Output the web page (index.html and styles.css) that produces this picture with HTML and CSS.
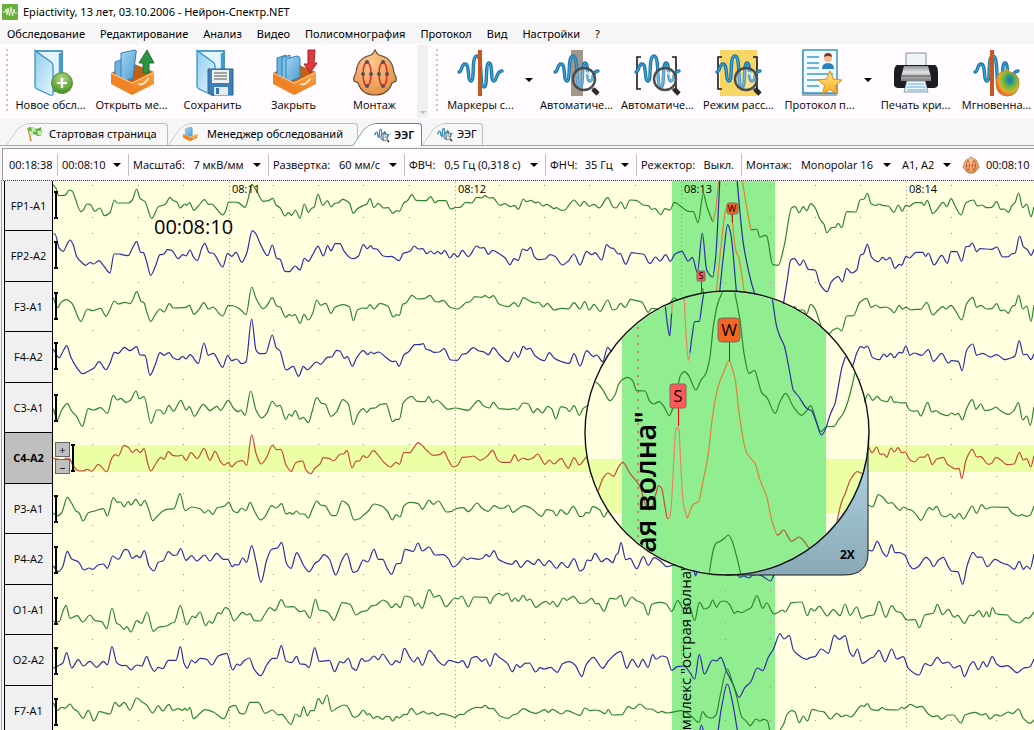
FILE: index.html
```
<!DOCTYPE html>
<html lang="ru">
<head>
    <meta charset="UTF-8">
    <meta name="viewport" content="width=device-width, initial-scale=1.0">
    <title>Epiactivity, 13 лет, 03.10.2006 - Нейрон-Спектр.NET</title>
    <link rel="stylesheet" href="styles.css">
</head>
<body>
    <svg class="defs" width="0" height="0" aria-hidden="true">
        <defs>
            <linearGradient id="g-folder" x1="0" y1="0" x2="1" y2="1">
                <stop offset="0" stop-color="#8fcdee"/><stop offset="1" stop-color="#e6f6fd"/>
            </linearGradient>
            <linearGradient id="g-sheet" x1="0" y1="0" x2="1" y2="1">
                <stop offset="0" stop-color="#a5d4f0"/><stop offset="1" stop-color="#4b9cd0"/>
            </linearGradient>
            <linearGradient id="g-box" x1="0" y1="0" x2="0" y2="1">
                <stop offset="0" stop-color="#fba544"/><stop offset="1" stop-color="#ee7a1c"/>
            </linearGradient>
            <radialGradient id="g-head" cx="0.4" cy="0.3" r="0.8">
                <stop offset="0" stop-color="#fcc98e"/><stop offset="1" stop-color="#e28c42"/>
            </radialGradient>
            <radialGradient id="g-plus" cx="0.5" cy="0.3" r="0.7">
                <stop offset="0" stop-color="#b5d98a"/><stop offset="1" stop-color="#3f8f1e"/>
            </radialGradient>
            <linearGradient id="g-star" x1="0" y1="0" x2="0" y2="1">
                <stop offset="0" stop-color="#ffe98a"/><stop offset="1" stop-color="#fba91c"/>
            </linearGradient>
            <linearGradient id="g-print" x1="0" y1="0" x2="0" y2="1">
                <stop offset="0" stop-color="#8d8f91"/><stop offset="0.4" stop-color="#e2e3e4"/><stop offset="1" stop-color="#77797b"/>
            </linearGradient>
            <radialGradient id="g-map" cx="0.6" cy="0.4" r="0.7">
                <stop offset="0" stop-color="#1f6fb0"/><stop offset="0.22" stop-color="#2f9a8a"/><stop offset="0.38" stop-color="#6cb43a"/><stop offset="0.65" stop-color="#d6b32c"/><stop offset="0.85" stop-color="#ee6a2a"/><stop offset="1" stop-color="#e23a2a"/>
            </radialGradient>

            <symbol id="i-wave" viewBox="0 0 48 48">
                <path d="M2 23C5 23 4 15 8 15C13 15 10 32 14 32C18 32 14 7 20 7C26 7 22 38 27 38C31 38 28 14 32 14C36 14 33 32 37 32C40 32 39 22 45 22" fill="none" stroke="#1b76a8" stroke-width="3.4" stroke-linecap="round"/>
                <path d="M2 23C5 23 4 15 8 15C13 15 10 32 14 32C18 32 14 7 20 7C26 7 22 38 27 38C31 38 28 14 32 14C36 14 33 32 37 32C40 32 39 22 45 22" fill="none" stroke="#43a4d3" stroke-width="1.2" stroke-linecap="round"/>
            </symbol>
            <symbol id="i-lens" viewBox="0 0 48 48">
                <circle cx="31" cy="30" r="11" fill="#fff" fill-opacity="0.25" stroke="#4c4c4c" stroke-width="2.4"/>
                <path d="M33 24a4 4 0 0 1 4 5" fill="none" stroke="#fff" stroke-width="2.4" stroke-linecap="round" opacity="0.7"/>
                <path d="M38.500 38.500L41 41" stroke="#777" stroke-width="2"/>
                <path d="M40 40L45 45" stroke="#2a2a2a" stroke-width="4.600"/>
            </symbol>
            <symbol id="i-brackets" viewBox="0 0 48 48">
                <path d="M7 8H3V40H7M38 8H42V40H38" fill="none" stroke="#1a1a1a" stroke-width="1.600"/>
            </symbol>
            <symbol id="i-folder" viewBox="0 0 48 48">
                <path d="M9 2H35V42H26" fill="#e2f4fc" stroke="#1c7fb8" stroke-width="1.600"/>
                <path d="M33 4V40" stroke="#3f9fd0" stroke-width="2.400"/>
                <path d="M8 1.500L24 13Q26 14 26 17V44Q26 47 23 46L10 40Q8 39 8 37Z" fill="url(#g-folder)" stroke="#2b8cc4" stroke-width="1.200"/>
            </symbol>
            <symbol id="i-box" viewBox="0 0 48 48">
                <path d="M3 24L24 34V46L3 35Z" fill="#f08228"/>
                <path d="M24 34L46 23V35L24 46Z" fill="url(#g-box)"/>
                <path d="M3 24L24 34L46 23" fill="none" stroke="#ffc27a" stroke-width="1.200"/>
                <path d="M31 35Q35 37 40 30" fill="none" stroke="#fff0d8" stroke-width="1.600" stroke-linecap="round"/>
            </symbol>
            <symbol id="i-head" viewBox="0 0 48 48">
                <path d="M20 6Q22 5 24 1Q26 5 28 6Q42 9 43 24Q46 28 45 32L41 34Q37 46 24 46Q11 46 7 34L3 32Q2 28 5 24Q6 9 20 6Z" fill="url(#g-head)" stroke="#6b4a32" stroke-width="1.200"/>
                <g fill="none" stroke="#e8222a" stroke-width="1.500"><ellipse cx="16" cy="25" rx="4" ry="12"/><ellipse cx="32" cy="25" rx="4" ry="12"/></g>
                <g fill="#5a5050"><circle cx="16" cy="13" r="2"/><circle cx="32" cy="13" r="2"/><circle cx="12" cy="25" r="2"/><circle cx="20" cy="25" r="2"/><circle cx="28" cy="25" r="2"/><circle cx="36" cy="25" r="2"/><circle cx="16" cy="37" r="2"/><circle cx="32" cy="37" r="2"/></g>
            </symbol>
        </defs>
    </svg>

    <header class="titlebar">
        <svg class="app-icon" viewBox="0 0 16 16"><rect width="16" height="16" rx="1" fill="#6cae3c"/><path d="M1 8H3L4 5L5 11L6 4L7.500 12L9 3L10.500 12L12 5L13 9H15" fill="none" stroke="#e6f6d4"/></svg>
        <span>Epiactivity, 13 лет, 03.10.2006 - Нейрон-Спектр.NET</span>
    </header>

    <nav class="menu">
        <a href="#">Обследование</a>
        <a href="#">Редактирование</a>
        <a href="#">Анализ</a>
        <a href="#">Видео</a>
        <a href="#">Полисомнография</a>
        <a href="#">Протокол</a>
        <a href="#">Вид</a>
        <a href="#">Настройки</a>
        <a href="#">?</a>
    </nav>

    <div class="toolbar">
        <span class="grip"></span>
        <button type="button" class="tool">
            <svg viewBox="0 0 48 48"><use href="#i-folder"/><circle cx="35" cy="34" r="10.500" fill="url(#g-plus)" stroke="#5b8f3c"/><path d="M35 29V39M30 34H40" stroke="#fff" stroke-width="2.200"/></svg>
            Новое обсл...
        </button>
        <button type="button" class="tool">
            <svg viewBox="0 0 48 48"><path d="M3 24L24 14L46 23L24 34Z" fill="#c65f16"/><path d="M7 13L20 8V32L7 27Z" fill="#6fb3dc" stroke="#2f83b8"/><path d="M13 4L27 1Q29 1 28 4L25 29L13 33Z" fill="url(#g-sheet)" stroke="#2f83b8"/><path d="M39 1L46 14H41V24H35V14H31Z" fill="#2f9440" stroke="#1d7430"/><use href="#i-box"/></svg>
            Открыть ме...
        </button>
        <button type="button" class="tool">
            <svg viewBox="0 0 48 48"><use href="#i-folder"/><path d="M19 20H44V46H22L19 43Z" fill="#3d7fb6" stroke="#28659b"/><rect x="23" y="21" width="17" height="13" fill="#eef1f3"/><path d="M25 24H38M25 27H38M25 30H38" stroke="#555"/><rect x="25" y="38" width="14" height="8" fill="#e3eaf0"/><rect x="27" y="39" width="3" height="6" fill="#2f78b4"/></svg>
            Сохранить
        </button>
        <button type="button" class="tool">
            <svg viewBox="0 0 48 48"><path d="M3 24L24 14L46 23L24 34Z" fill="#c65f16"/><path d="M7 9L16 6V32L7 27Z" fill="#6fb3dc" stroke="#2f83b8"/><path d="M12 9L20 6V32L12 29Z" fill="#83c0e4" stroke="#2f83b8"/><path d="M16 10L27 7Q30 7 30 10V28L16 34Z" fill="url(#g-sheet)" stroke="#2f83b8"/><path d="M38 1H45L44 14H47L40 24L34 15H38Z" fill="#dc3a3a" stroke="#b02028"/><use href="#i-box"/></svg>
            Закрыть
        </button>
        <button type="button" class="tool">
            <svg viewBox="0 0 48 48"><use href="#i-head"/></svg>
            Монтаж
        </button>
        <button type="button" class="overflow" aria-label="Другие кнопки"></button>
        <span class="grip"></span>
        <button type="button" class="tool">
            <svg viewBox="0 0 48 48"><use href="#i-wave"/><rect x="21" y="1" width="4" height="46" fill="#c8561f"/></svg>
            Маркеры с...
        </button>
        <button type="button" class="drop" aria-label="Выбрать маркер"></button>
        <button type="button" class="tool">
            <svg viewBox="0 0 48 48"><rect x="18" y="1" width="12" height="46" fill="#a3968a"/><use href="#i-wave"/><use href="#i-lens"/></svg>
            Автоматиче...
        </button>
        <button type="button" class="tool">
            <svg viewBox="0 0 48 48"><use href="#i-brackets"/><use href="#i-wave"/><use href="#i-lens"/></svg>
            Автоматиче...
        </button>
        <button type="button" class="tool">
            <svg viewBox="0 0 48 48"><rect x="5" y="1" width="37" height="46" fill="#f8d567"/><use href="#i-brackets"/><use href="#i-wave"/><use href="#i-lens"/></svg>
            Режим расс...
        </button>
        <button type="button" class="tool">
            <svg viewBox="0 0 48 48"><rect x="6" y="2" width="35" height="45" fill="#9cb4c0"/><rect x="7" y="1" width="34" height="43" fill="#f2fafd" stroke="#2d8fbe" stroke-width="1.400"/><path d="M11 8H23M11 14H23M11 19H23M11 25H37M11 31H27M11 37H23" stroke="#3f9fd0" stroke-width="1.600"/><circle cx="32" cy="9" r="4" fill="#f5b88a"/><path d="M28 8Q28 4 32 4Q36 4 36 8Q32 6 28 8Z" fill="#7a3a1c"/><path d="M26 20Q26 14 32 14Q38 14 38 20Z" fill="#2b7fc0"/><path d="M34 22L37.500 30L46 31L39.500 36.500L41.500 45L34 40.500L26.500 45L28.500 36.500L22 31L30.500 30Z" fill="url(#g-star)" stroke="#d98c1a"/></svg>
            Протокол п...
        </button>
        <button type="button" class="drop" aria-label="Выбрать протокол"></button>
        <button type="button" class="tool">
            <svg viewBox="0 0 48 48"><rect x="14" y="4" width="20" height="14" fill="#eef4f7" stroke="#8a8f92"/><path d="M5 16H43Q46 17 46 24V36Q45 39 42 39H6Q3 39 2 36V24Q2 17 5 16Z" fill="#1b1d20"/><path d="M12 17H36L39 28V32H9V28Z" fill="url(#g-print)"/><path d="M9 27H39" stroke="#555"/><path d="M15 32H33L36 43H12Z" fill="#f0f6fa" stroke="#8a9aa4"/><path d="M16 35H32M15 38H33M15 41H34" stroke="#5ea9dc"/></svg>
            Печать кри...
        </button>
        <button type="button" class="tool">
            <svg viewBox="0 0 48 48"><use href="#i-wave"/><rect x="17" y="1" width="4" height="46" fill="#c8561f"/><path d="M34 20L37 23Q46 25 46 34Q45 47 34 47Q23 46 23 34Q23 24 31 22Z" fill="url(#g-map)" stroke="#c9853a"/></svg>
            Мгновенна...
        </button>
    </div>

    <div class="tabs">
        <button type="button" class="tab tab-start">
            <svg viewBox="0 0 16 16"><path d="M2 2L5 15" stroke="#d98a32" stroke-width="1.600"/><path d="M2 2Q5 0 8 2T15 1L16 9Q12 11 10 9T4 10Z" fill="#5db446"/><path d="M5 1L6 5L10 6L9 2ZM11 5L15 5L16 9L12 9ZM3 5L7 5L7 9L4 10Z" fill="#c6eab4"/></svg>
            Стартовая страница
        </button>
        <button type="button" class="tab tab-manager">
            <svg viewBox="0 0 48 48"><path d="M10 8L26 3Q31 3 31 8V30L10 34Z" fill="url(#g-sheet)" stroke="#2f83b8"/><use href="#i-box"/></svg>
            Менеджер обследований
        </button>
        <button type="button" class="tab tab-eeg active">
            <svg viewBox="0 0 48 48"><use href="#i-wave"/><use href="#i-lens"/></svg>
            ЭЭГ
        </button>
        <button type="button" class="tab tab-eeg">
            <svg viewBox="0 0 48 48"><use href="#i-wave"/><use href="#i-lens"/></svg>
            ЭЭГ
        </button>
    </div>

    <div class="params">
        <span class="param total">00:18:38</span>
        <label class="param position"><select aria-label="Время"><option>00:08:10</option></select></label>
        <label class="param scale">Масштаб: <select><option>7 мкВ/мм</option></select></label>
        <label class="param sweep">Развертка: <select><option>60 мм/с</option></select></label>
        <label class="param highpass">ФВЧ: <select><option>0,5 Гц (0,318 с)</option></select></label>
        <label class="param lowpass">ФНЧ: <select><option>35 Гц</option></select></label>
        <span class="param notch">Режектор: <span>Выкл.</span></span>
        <label class="param montage">Монтаж: <select><option>Monopolar 16</option></select></label>
        <label class="param refs"><select aria-label="Референты"><option>A1, A2</option></select></label>
        <span class="param current"><svg viewBox="0 0 48 48"><use href="#i-head"/></svg>00:08:10</span>
    </div>

    <main class="record">
        <ul class="channels">
            <li>FP1-A1</li>
            <li>FP2-A2</li>
            <li>F3-A1</li>
            <li>F4-A2</li>
            <li>C3-A1</li>
            <li class="selected">C4-A2</li>
            <li>P3-A1</li>
            <li>P4-A2</li>
            <li>O1-A1</li>
            <li>O2-A2</li>
            <li>F7-A1</li>
        </ul>
        <div class="chart">
            <svg class="plot">
                <defs>
                    <clipPath id="lens-clip"><circle cx="727" cy="433" r="141"/></clipPath>
                    <linearGradient id="g-handle" x1="0" y1="0" x2="0" y2="1">
                        <stop offset="0" stop-color="#b4d9ea"/><stop offset="1" stop-color="#8aa9b6"/>
                    </linearGradient>
                </defs>
                <g transform="translate(-53 -181)">
                    <rect class="active-band" x="74" y="445" width="100%" height="27"/>
                    <rect class="complex" x="672" y="181" width="103" height="100%"/>
                    <g id="grid"></g>
                    <g id="traces"></g>
                    <g id="brackets"></g>

                    <text class="tick" x="232" y="193">08:11</text>
                    <text class="tick" x="458" y="193">08:12</text>
                    <text class="tick" x="684" y="193">08:13</text>
                    <text class="tick" x="909" y="193">08:14</text>
                    <text class="clock" x="154" y="234">00:08:10</text>
                    <text class="note" text-anchor="end" transform="translate(691 565) rotate(-90)">мплекс "острая волна"</text>

                    <path class="stick-w" d="M732.500 214V223"/>
                    <rect class="tag tag-w" x="727" y="203" width="11" height="11" rx="2"/>
                    <text class="tag-text" x="732" y="212">W</text>
                    <path class="stick-s" d="M701.500 281V293"/>
                    <rect class="tag tag-s" x="697" y="271" width="8" height="10" rx="1"/>
                    <text class="tag-text" x="701" y="279">S</text>

                    <path d="M868 433V553Q868 575 844 575H727Z" fill="url(#g-handle)" stroke="#1a1a1a"/>
                    <g clip-path="url(#lens-clip)">
                        <rect class="lens-paper" x="585" y="291" width="284" height="285"/>
                        <rect class="active-band" x="585" y="459" width="284" height="54"/>
                        <rect class="complex" x="622" y="291" width="204" height="285"/>
                        <path class="lens-second" d="M638 327V576"/>
                        <g id="lens-traces"></g>
                        <text class="lens-note" text-anchor="end" transform="translate(656 411) rotate(-90)">ая волна"</text>
                    </g>
                    <path class="stick-w" d="M729.500 342V361"/>
                    <rect class="tag tag-w" x="718" y="318" width="22" height="24" rx="4"/>
                    <text class="lens-tag-text" x="729" y="336">W</text>
                    <path class="stick-s" d="M678.500 408V426"/>
                    <rect class="tag tag-s" x="670" y="384" width="16" height="24" rx="2"/>
                    <text class="lens-tag-text" x="678" y="402">S</text>
                    <circle class="lens-rim" cx="727" cy="433" r="142"/>
                    <text class="zoom-text" x="840" y="559">2X</text>
                </g>
            </svg>
            <div class="gain">
                <button type="button" aria-label="Увеличить">+</button>
                <button type="button" aria-label="Уменьшить">–</button>
            </div>
        </div>
    </main>

    <script src="script.js"></script>
</body>
</html>
```
FILE: styles.css
```
* {
    box-sizing: border-box;
}

body {
    margin: 0;
    height: 100vh;
    display: flex;
    flex-direction: column;
    overflow: hidden;
    background: #f6f6f6;
    color: #000;
    font-family: "Open Sans", "Noto Sans", sans-serif;
    font-size: 11px;
    line-height: 16px;
    white-space: nowrap;
}

button,
select {
    font: inherit;
    color: inherit;
    border: 0;
    padding: 0;
    margin: 0;
    background: transparent;
}

.defs {
    position: absolute;
}

.titlebar,
.menu,
.tabs {
    font-family: "Noto Sans", "Open Sans", sans-serif;
}

.titlebar {
    display: flex;
    align-items: center;
    gap: 5px;
    height: 23px;
    padding-left: 2px;
    background: #fff;
}

.app-icon {
    width: 16px;
    height: 16px;
}

.menu {
    display: flex;
    align-items: center;
    gap: 15px;
    height: 21px;
    padding-left: 7px;
}

.menu a {
    color: inherit;
    text-decoration: none;
}

/* Toolbar */

.toolbar {
    display: flex;
    flex-shrink: 0;
    height: 75px;
    padding-top: 5px;
    background: #fffbff;
}

.grip {
    flex: none;
    width: 2px;
    height: 62px;
    margin: 0 2px 0 6px;
    background: repeating-linear-gradient(#c4c4c4 0 2px, transparent 2px 5px);
}

.tool {
    flex: none;
    display: flex;
    flex-direction: column;
    align-items: center;
    width: 81px;
}

.tool svg {
    width: 48px;
    height: 48px;
}

.overflow {
    flex: none;
    position: relative;
    width: 11px;
    height: 73px;
    margin: -4px 2px 0 2px;
    background: #f0f0f0;
}

.overflow::after {
    content: "";
    position: absolute;
    left: 3px;
    bottom: 4px;
    border: 3px solid transparent;
    border-top-color: #bbb;
    border-bottom: 0;
}

.drop {
    flex: none;
    width: 15px;
    height: 62px;
    display: flex;
    align-items: center;
    justify-content: center;
}

.drop::after,
label.param::after {
    content: "";
    border: 4px solid transparent;
    border-top-color: #000;
    border-bottom: 0;
}

/* Tabs */

.tabs {
    display: flex;
    flex-shrink: 0;
    height: 27px;
    padding: 4px 0 0 6px;
    border-bottom: 1px solid #a5a5a5;
}

.tab {
    position: relative;
    z-index: 0;
    display: flex;
    align-items: center;
    gap: 7px;
    height: 22px;
}

.tab svg {
    width: 16px;
    height: 16px;
}

.tab::before,
.tab::after {
    content: "";
    position: absolute;
    z-index: -1;
    top: 0;
    bottom: 0;
    border: 1px solid #bdbdbd;
    border-bottom: 0;
    background: #f7f7f7;
}

.tab::before {
    left: 0;
    width: 30px;
    border-right: 0;
    border-radius: 9px 0 0 0;
    transform: skewX(-34deg);
    transform-origin: bottom;
}

.tab::after {
    left: 26px;
    right: 0;
    border-left: 0;
    border-radius: 0 4px 0 0;
}

.tab-start {
    width: 162px;
    padding-left: 20px;
}

.tab-manager {
    width: 190px;
    padding-left: 14px;
    gap: 9px;
}

.tab-eeg {
    width: 61px;
    padding-left: 15px;
    gap: 4px;
}

.tab.active {
    z-index: 1;
    width: 70px;
    margin-left: -6px;
    padding-left: 22px;
    font-weight: 600;
    height: 23px;
}

.tab.active::before,
.tab.active::after {
    border-color: #4a86c8;
    background: #fff;
}

/* Recording parameters */

.params {
    display: flex;
    flex-shrink: 0;
    align-items: center;
    height: 32px;
    margin: 2px 0 0 2px;
    padding-left: 2px;
    border-top: 1px solid #999;
    border-left: 1px solid #999;
    background: #fffbff;
}

.param {
    position: relative;
    flex: none;
    display: flex;
    align-items: center;
    justify-content: space-between;
    height: 22px;
    padding: 0 7px 0 4px;
    border-right: 1px solid #c0c0c0;
}

.param select {
    appearance: none;
    flex: none;
    height: 20px;
}

.total {
    width: 53px;
}

.position {
    width: 71px;
}

.scale {
    width: 140px;
}

.sweep {
    width: 136px;
}

.highpass {
    width: 141px;
}

.lowpass {
    width: 91px;
}

.notch {
    width: 105px;
}

.montage {
    width: 156px;
    border-right: 0;
}

.refs {
    width: 60px;
    border-right: 0;
}

.current {
    gap: 6px;
    border-right: 0;
}

.current svg {
    width: 18px;
    height: 18px;
}

/* Record */

.record {
    flex: 1;
    min-height: 0;
    display: flex;
    margin-left: 1px;
    padding-left: 2px;
    border-left: 1px solid #a5a5a5;
    border-top: 1px dotted #333;
}

.channels {
    flex: none;
    width: 49px;
    margin: 0;
    padding: 0;
    overflow: hidden;
    list-style: none;
    border: solid #000;
    border-width: 0 1px;
    background: #f0f0f0;
}

.channels li {
    display: flex;
    align-items: center;
    justify-content: center;
    height: 51px;
    border-bottom: 1px solid #000;
}

.channels li:nth-child(odd) {
    height: 50px;
}

.channels .selected {
    font-weight: bold;
    background: #bfbfbf;
}

.chart {
    position: relative;
    flex: 1;
    min-width: 0;
    overflow: hidden;
    background: #ffffe0;
}

.plot {
    display: block;
    width: 100%;
    height: 100%;
}

/* gain buttons lie over the trace of the selected channel */
.gain {
    position: absolute;
    left: 2px;
    top: 261px;
    display: flex;
    flex-direction: column;
    gap: 2px;
}

.gain button {
    width: 15px;
    height: 15px;
    line-height: 11px;
    border: 1px solid #666;
    background: #c0c0c0;
}

.active-band {
    fill: #ebffa5;
}

.complex {
    fill: #90ee90;
}

.lens-paper {
    fill: #ffffe0;
}

.second {
    stroke: #b5837a;
    stroke-dasharray: 1 3;
}

.dots {
    fill: #b5837a;
}

.lens-second {
    stroke: #c08078;
    stroke-width: 2;
    stroke-dasharray: 2 6;
}

.trace {
    fill: none;
    stroke-width: 1.2;
}

.green {
    stroke: #2f852f;
}

.blue {
    stroke: #2e2ea2;
}

.red {
    stroke: #c84a3a;
}

.brown {
    stroke: #a5552a;
}

.salmon {
    stroke: #ea8068;
}

.orange {
    stroke: #e0813a;
}

.bracket {
    fill: none;
    stroke: #000;
    stroke-width: 2;
}

.tick {
    font-size: 11px;
}

.clock {
    font-size: 20px;
}

.note {
    font-size: 15px;
}

.lens-note {
    font-size: 29px;
    font-weight: 600;
}

.tag {
    stroke: #7a6a5a;
}

.tag-w {
    fill: #f26522;
}

.tag-s {
    fill: #ff5a5a;
}

.stick-w {
    stroke: #a02010;
}

.stick-s {
    stroke: #f00;
}

.tag-text {
    font-size: 9px;
    text-anchor: middle;
}

.lens-tag-text {
    font-size: 17px;
    text-anchor: middle;
}

.lens-rim {
    fill: none;
    stroke: #111;
    stroke-width: 1.4;
}

.zoom-text {
    font-size: 12px;
    font-weight: bold;
}
```
FILE: script.js
```
const SVG_NS = 'http://www.w3.org/2000/svg';

// Every part is [originX, originY, samples]; the samples are thirds of a pixel.
const traces = [
    ['green',
        [0, 180, '160,14 168,25 176,47 185,46 195,46 208,30 215,32 243,95 252,87 260,72 270,73 285,94 300,84 313,107 330,98 343,60 352,69 385,69 397,60 410,27 420,55 435,65 455,115 466,98 475,80 490,76 498,70 510,52 520,62 530,65 540,84 555,72 560,76 568,68 582,91 595,78 614,59 625,73 635,72 650,87 668,105 678,90 685,67 700,66 715,68 735,82 745,55 755,13 768,30 790,64 805,62 818,55 828,75 840,83 855,108 865,98 875,106 886,90'],
        [300, 180, '0,115 13,72 25,97 35,85 42,82 54,43 68,76 82,62 93,80 105,70 115,68 128,58 148,69 160,100 172,86 192,76 200,73 210,56 222,83 235,70 250,84 265,83 278,100 290,92 298,94 312,68 322,62 336,44 348,61 378,62 392,50 405,68 415,62 437,62 452,87 465,83 480,82 497,67 515,69 530,52 545,54 555,47 568,54 578,53 600,76 615,71 632,80 643,76 655,88 670,57 680,65 692,61 705,68 715,66 728,78 740,73 763,86 768,83 785,91 795,90 805,78 822,60'],
        [580, 180, '0,78 12,64 28,79 42,73 57,84 83,53 100,82 108,84 123,66 135,86 150,60 168,61 190,75 205,77 215,88 225,86 242,104 255,86 270,90 283,67 300,77 325,94 340,95 354,128 370,40 380,78 398,126']],
    ['orange', [580, 180, '398,126 407,90 417,-10']],
    ['orange', [580, 180, '484,-10 490,20 498,70 513,150']],
    ['green',
        [580, 180, '513,150 530,147'],
        [760, 180, '0,172 15,166 20,168 38,254 55,256 72,200 95,83 105,80 118,98 130,80 140,92 152,71 165,83 180,118 192,133 200,158 215,143 225,142 235,130 245,143 260,95 288,96 300,60 312,57 322,40 333,71 348,76 356,72 370,77 385,78 402,97 415,75 427,94 437,76 448,79 465,68 485,68 492,76 502,61 518,101 530,90 550,67 560,80 573,56 585,77 603,105 618,68 640,60 652,78 665,75 680,83 695,82 710,65 722,88 733,87 745,97 757,75 765,68 776,39 788,83 800,72 813,110 822,80']],

    ['blue',
        [0, 180, '160,162 165,162 178,205 190,214 200,195 210,180 220,195 230,230 245,247 257,256 270,247 280,252 297,242 310,256 330,279 342,222 360,222 365,224 385,227 397,205 410,185 422,217 430,218 440,245 452,286 465,262 480,224 492,222 502,209 515,211 535,236 548,224 558,228 570,210 580,230 592,242 605,205 614,190 628,218 640,220 668,261 683,220 695,229 708,217 725,247 740,220 757,152 768,162 780,190 803,227 817,195 830,235 840,238 855,274 868,275 885,258'],
        [300, 180, '0,270 13,235 25,244 38,224 54,199 70,228 83,197 93,212 106,191 120,191 132,213 150,233 160,236 175,229 190,194 202,206 212,197 220,206 230,207 250,228 265,230 275,229 285,235 297,242 310,220 330,214 343,198 355,207 368,206 380,221 392,213 403,222 413,214 423,222 434,212 450,234 462,221 473,231 487,211 505,230 530,198 540,204 552,203 565,223 578,211 600,223 615,233 630,254 642,236 655,241 668,207 680,212 692,202 703,230 715,239 735,237 750,224 765,229 787,255 805,243 822,222'],
        [580, 180, '0,255 20,214 35,224 45,218 65,240 80,194 92,204 100,205 115,222 120,220 137,253 155,218 178,221 190,222 210,251 226,231 240,243 257,224 271,244 285,222 305,214 325,243 337,232 352,277 367,160 380,270 398,291 407,230 420,-10']],
    ['blue', [580, 180, '470,-10 490,190 512,300 525,345']],
    ['orange', [580, 180, '408,345 425,180 437,90 446,74 455,110 467,210 477,235 494,345']],
    ['blue', [580, 180, '418,345 430,230 443,134 452,160 470,345']],
    ['blue',
        [760, 180, '68,385 82,300 92,240 103,236 120,256 130,240 145,268 165,270 180,313 202,335 213,307 235,290 247,306 260,265 275,279 290,270 302,224 310,222 322,193 335,232 355,245 368,232 378,240 390,233 405,265 418,253 425,256 438,229 448,234 468,217 488,217 497,229 505,219 522,255 545,226 562,250 573,215 590,215 605,244 618,200 628,199 637,189 650,215 660,206 695,208 710,201 728,231 745,230 755,222 765,220 779,168 790,200 803,210 813,226 822,208']],

    ['green',
        [0, 180, '160,352 172,383 185,365 198,359 215,369 243,424 262,387 278,392 302,385 318,409 330,388 343,363 355,372 375,367 390,371 398,360 410,335 424,365 432,368 440,395 452,424 465,405 480,387 492,396 508,371 520,384 558,382 568,376 582,403 597,388 612,368 625,387 640,381 655,398 668,408 685,376 702,378 722,389 738,404 755,321 768,355 790,386 800,378 817,353 830,378 840,381 857,412 868,404 875,408 885,404'],
        [300, 180, '0,430 12,403 25,420 38,400 50,360 62,376 77,370 93,400 105,382 128,374 148,380 160,422 173,389 190,384 200,385 210,374 222,387 240,370 263,378 280,411 290,404 298,406 308,373 318,369 336,346 352,357 372,356 390,346 405,364 415,366 430,361 450,382 473,387 487,378 497,368 510,365 525,350 545,352 555,347 568,354 580,347 598,373 625,380 643,368 655,380 670,353 688,362 705,369 715,366 730,381 742,370 762,390 785,385 805,387 822,368'],
        [580, 180, '0,387 14,365 28,390 42,373 60,394 83,360 98,390 108,388 122,370 135,382 152,358 165,361 185,366 205,397 215,385 232,387 255,392 270,370 283,354 300,375 350,420 368,326 378,400 500,400 560,420'],
        [760, 180, '98,385 105,380 112,390 130,390 140,402 152,373 163,383 188,448 205,462 218,451 233,444 245,453 260,408 280,407 300,366 320,355 333,382 348,375 360,383 378,381 392,388 402,398 418,376 427,388 437,382 455,390 465,388 482,388 500,367 518,405 535,390 548,380 558,387 573,376 588,395 605,420 620,371 638,352 650,382 662,376 680,387 695,386 710,371 722,392 733,390 745,400 757,378 765,376 776,346 788,387 800,378 813,424 822,375']],

    ['blue',
        [0, 180, '160,508 178,533 190,512 200,497 212,530 232,565 248,581 265,574 282,564 297,545 318,569 330,550 343,517 355,520 373,502 390,512 410,500 420,525 435,526 450,586 465,556 480,518 492,526 507,518 520,534 535,539 548,529 558,537 570,524 595,550 612,489 625,526 640,520 668,562 683,526 695,542 710,537 725,551 738,545 755,417 768,510 780,521 797,520 817,465 828,502 840,513 858,570 880,559 895,589'],
        [300, 180, '0,583 10,559 22,569 50,546 62,553 82,532 95,531 110,511 120,513 133,535 142,530 157,559 170,533 190,512 203,524 212,516 222,521 235,516 260,534 278,545 287,543 297,559 312,524 325,516 345,494 358,494 370,491 378,507 390,511 403,517 418,516 432,506 452,540 472,541 487,523 498,521 520,503 535,512 552,516 565,524 580,503 598,524 625,545 643,516 655,532 670,499 680,508 690,505 705,527 733,542 748,518 763,535 785,545 808,550 822,521'],
        [580, 180, '0,558 20,512 40,530 50,525 68,545 83,502 92,512 110,530'],
        [760, 180, '255,580 278,556 290,520 302,500 312,504 322,498 338,533 358,539 372,522 380,530 392,520 403,533 418,517 427,519 437,498 450,526 462,519 485,526 505,509 520,544 545,520 565,549 575,542 595,544 606,572 620,510 638,492 650,526 668,520 692,531 710,524 735,539 752,534 765,528 778,482 790,524 800,523 813,539 822,522']],

    ['green',
        [0, 180, '160,686 172,719 185,690 202,671 215,693 230,710 247,739 265,686 280,690 302,683 322,700 340,646 352,660 362,655 378,667 392,660 408,633 418,656 432,650 453,730 470,690 480,690 492,702 507,676 520,694 543,661 558,690 568,680 583,709 610,673 630,692 650,679 662,691 685,661 700,684 715,695 722,690 735,706 752,633 768,690 785,714 800,700 817,664 830,679 840,676 857,718 868,702 875,709 886,692'],
        [300, 180, '0,718 10,712 25,728 37,692 50,653 65,670 75,672 93,709 110,695 128,659 145,672 160,734 175,700 190,686 200,697 212,685 225,684 240,674 258,671 278,725 288,718 298,718 310,668 335,649 352,664 375,665 386,650 398,668 410,660 425,671 443,688 465,684 505,691 520,676 535,661 552,679 568,684 580,667 597,686 630,688 643,685 652,690 670,669 685,672 700,698 712,686 727,699 743,679 755,686 767,717 783,680 800,685 808,695 822,677 838,706 850,685 862,678'],
        [860, 370, '5,110 15,90 25,72 38,91 52,79 62,90 82,95 92,79 102,97 112,96 122,99 135,98 148,119 163,124 172,122 182,138 203,97 215,126 228,122 240,130 262,137 275,129 285,135 295,130 307,150 320,115 337,89 348,118 362,102 375,122 395,118 408,111 420,121 445,133 462,121 475,98 488,150 500,138 511,166 522,110']],

    ['red',
        [0, 440, '160,54 175,58 190,60 200,54 210,58 218,75 235,92 248,93 262,88 275,94 295,73 320,95 335,55 345,44 355,48 372,16 385,22 397,37 410,28 420,38 432,26 442,65 452,93 465,75 483,52 492,58 505,35 520,47 535,48 545,45 558,61 573,38 592,56 612,26 630,61 645,34 662,66 672,75 685,68 695,80 710,66 728,62 740,76 755,-16 768,40 783,72 800,52 817,16 830,29 843,28 858,75 874,94 887,68'],
        [300, 440, '0,64 8,63 18,90 33,101 45,84 60,72 70,53 88,55 100,63 122,42 130,42 141,31 156,84 168,64 178,63 190,47 200,53 220,32 235,46 250,65 272,81 288,67 298,73 312,37 330,38 342,22 354,8 368,18 380,31 400,46 420,43 432,35 445,60 460,81 473,76 487,52 505,51 520,48 540,61 562,48 578,31 592,58 605,67 630,67 644,44 655,62 668,54 685,59 700,53 713,42 735,73 748,60 762,72 783,55 805,85 822,53 838,75 860,52'],
        [860, 370, '15,240 24,230 36,248 50,231 60,253 72,252 80,262 93,234 103,246 114,233 125,248 135,246 150,270 163,276 180,261 192,262 203,253 217,284 230,267 250,262 262,283 275,291 285,297 297,295 305,326 318,270 337,238 350,261 362,260 385,283 395,280 408,262 425,272 440,284 462,282 478,247 490,270 500,266 512,290 522,258']],

    ['green',
        [0, 440, '160,219 172,228 185,218 202,172 215,190 228,213 237,218 249,243 265,218 280,214 310,206 322,228 340,173 352,187 362,186 372,200 385,185 393,195 407,178 422,197 434,182 445,205 458,242 470,230 490,212 500,208 522,206 540,161 555,212 575,201 600,206 614,219 625,210 638,223 652,203 672,199 686,187 700,213 712,218 725,204 738,212 750,187 765,217 782,240 795,230 815,197 828,204 845,191 858,222 870,218 877,223 890,213'],
        [300, 440, '0,222 12,222 25,234 37,208 50,183 62,195 75,197 95,226 107,227 127,183 145,195 162,240 178,236 190,226 205,213 222,192 245,198 262,213 277,240 288,224 300,231 312,197 330,187 355,191 367,208 387,180 400,193 415,183 440,216 455,214 465,207 490,203 505,215 532,189 545,204 565,214 582,197 600,205 612,204 625,195 638,217 655,206 672,197 692,204 712,221 725,229 740,209 757,212 770,227 782,209 800,223 820,199'],
        [580, 380, '0,410 10,408 18,397 27,400 38,380 60,390 72,411 82,395 110,380'],
        [860, 370, '10,400 24,405 38,410 55,374 70,383 85,400 95,398 108,411 120,421 130,411 140,416 155,421 170,436 182,451 208,413 218,420 230,409 245,437 258,440 272,432 284,445 298,430 310,447 325,425 336,408 350,430 365,404 378,417 395,411 442,412 455,428 475,438 485,434 500,439 510,436 522,408']],

    ['blue',
        [0, 440, '160,378 175,395 188,380 202,334 215,357 235,365 252,390 268,384 278,388 295,375 310,372 322,385 338,348 355,358 375,328 383,330 397,355 410,347 420,353 433,332 447,378 462,393 475,367 490,362 505,335 520,346 530,345 542,326 558,361 575,347 590,363 614,345 630,363 650,340 670,358 683,358 697,380 705,374 715,375 728,354 740,367 755,317 768,365 783,427 800,360 815,328 832,324 845,307 860,372 873,385 890,338'],
        [300, 440, '0,353 10,375 28,395 45,370 57,362 72,344 88,357 107,405 125,362 140,341 160,397 172,393 190,360 203,366 222,328 235,358 248,358 262,386 275,403 290,371 302,370 315,328 340,334 354,309 367,333 387,321 405,345 430,344 445,356 460,381 478,367 490,351 502,359 512,354 535,358 548,355 558,343 568,350 582,332 595,358 610,366 635,373 648,362 662,382 682,362 702,374 715,358 733,377 747,362 770,385 785,367 802,383 822,356'],
        [580, 380, '0,573 10,568 22,540 33,542 45,520 65,545 80,535 98,548 108,525 114,520 123,488 137,539 150,535 170,566 190,530 205,556 222,533 240,542 260,560 300,550 340,565 347,588 354,560 420,570 470,580 480,592 490,588 508,594 518,585 535,583 550,590 572,603 582,585 640,540'],
        [860, 370, '10,550 24,540 36,543 52,514 68,547 80,559 95,524 105,548 118,548 135,556 148,585 160,597 175,590 198,562 210,572 220,590 235,571 250,562 265,590 275,603 293,605 308,643 322,585 339,547 352,562 365,561 382,590 405,568 425,578 435,582 445,585 463,598 478,574 490,598 500,588 510,597 522,552']],

    ['green',
        [0, 440, '160,545 178,545 188,515 198,496 210,535 232,527 248,546 270,525 285,542 305,545 320,566 336,504 350,550 360,555 372,568 380,560 393,576 410,542 425,550 441,516 460,574 475,562 500,558 515,549 523,547 541,497 560,554 578,528 585,533 600,516 617,557 628,543 636,550 655,518 663,522 675,503 685,506 702,542 728,517 740,525 750,521 762,541 780,543 795,522 810,503 825,512 844,479 858,501 880,500'],
        [300, 440, '0,515 12,512 30,534 46,478 58,510 72,512 85,518 102,541 112,520 127,488 150,493 168,525 185,515 200,512 215,497 228,495 250,480 262,487 275,503 288,491 300,503 315,468 335,474 345,498 354,489 366,505 388,449 403,472 418,466 437,500 465,474 475,477 485,468 505,500 522,471 560,472 570,491 580,472 597,460 608,466 622,459 635,484 645,474 655,484 670,466 680,481 690,477 708,502 722,492 738,484 750,493 758,484 772,500 790,474 800,481 820,469'],
        [580, 560, '0,130 15,129 35,115 48,132 55,130 72,154 90,115 108,117 123,106 135,139 155,111 170,122 190,131 205,165 215,133 240,127 258,131 275,154 293,122 310,145 325,130 344,181 358,127 373,147 388,141 398,120 410,142 420,126 435,123 450,135 463,160 472,154 485,158 500,150 513,143 531,107 548,145 560,129 582,162 598,155 608,150 615,156 635,128 665,126 682,167 693,146 703,153 718,139 742,168 760,148 780,167 795,132 810,166 830,141 845,175 860,169 882,164 897,124 917,172 935,137 950,155 962,157 980,180 1005,179 1018,203 1035,165 1060,160 1072,133 1088,164 1105,148 1122,172 1133,166 1153,190 1170,165 1180,167 1197,152 1210,171 1220,155 1228,171 1237,143 1247,160 1258,163 1282,165 1295,180 1318,189 1338,173 1345,175 1362,156']],

    ['blue',
        [0, 440, '160,685 175,677 188,670 200,638 215,684 235,659 250,678 270,664 290,682 310,664 322,675 336,620 350,668 365,677 378,676 393,690 405,678 413,675 425,678 440,650 452,678 463,694 475,682 488,686 505,661 528,661 541,620 552,670 562,685 575,660 585,669 600,655 620,658 635,675 655,648 680,640 698,690 712,672 720,676 732,662 748,654 762,687 782,707 800,675 818,655 830,655 844,617 858,663 875,668 890,649'],
        [300, 440, '0,672 15,673 27,683 44,623 58,664 88,661 104,695 120,665 130,669 145,655 157,684 168,691 185,655 195,664 208,661 222,648 235,659 248,642 262,660 275,675 288,662 300,668 313,625 330,653 342,666 353,652 367,676 388,631 402,645 415,664 432,676 447,661 475,668 488,662 503,683 515,654 530,650 545,664 557,657 570,679 585,641 598,652 622,670 637,695 650,674 660,682 675,670 688,669 707,696 720,683 733,687 752,682 772,697 787,672 808,665 825,675'],
        [580, 560, '0,343 5,350 18,315 40,292 68,325 85,303 122,274 140,325 157,298 175,322 188,298 204,322 218,283 228,298 245,288 260,292 275,331 292,320 312,318 330,338 344,357 358,283 373,342 398,300 410,303 422,292 440,335 460,375 477,412 495,382 512,366 532,324 548,332 565,292 580,268 600,221 612,237 628,226 640,270 655,285 680,298 690,293 705,290 724,267 745,280 763,226 778,238 795,227 810,278 820,289 832,267 847,310 875,293 880,292 897,271 915,305 935,267 950,297 970,290 985,325 1017,345 1035,311 1052,317 1072,292 1088,310 1105,306 1122,324 1140,317 1153,350 1170,315 1180,305 1195,329 1210,305 1220,320 1237,290 1250,312 1265,320 1282,317 1312,338 1330,325 1350,320 1362,297']],

    ['green',
        [0, 440, '160,788 172,811 185,802 195,805 210,792 222,808 232,813 249,835 265,811 282,843 298,815 330,822 345,787 358,799 373,787 390,810 410,774 425,785 440,795 458,819 475,797 488,813 507,793 518,811 535,806 547,811 555,805 562,811 570,802 580,836 600,820 615,809 640,816 672,836 690,801 705,796 720,820 733,822 750,787 775,787 795,820 817,810 835,825 845,823 873,853 887,822'],
        [300, 440, '0,830 11,800 22,827 32,812 42,812 55,775 67,792 81,765 95,814 110,805 132,795 140,797 162,832 175,827 190,810 202,825 208,821 220,835 232,829 248,838 258,829 268,830 278,843 290,830 298,834 312,823 320,824 334,805 350,823 370,815 385,822 398,818 412,827 425,821 450,827 465,832 480,823 490,824 500,815 530,802 545,803 555,796 568,806 578,805 600,828 625,835 640,824 650,822 670,806 690,815 708,820 735,809 745,817 757,808 785,822 800,812'],
        [580, 560, '0,466 15,444 30,452 45,450 60,453 75,461 85,449 97,465 125,464 145,440 160,446 180,432 200,447 215,447 235,458 245,454 260,459 305,452 330,465 357,487 368,455 380,470 395,474 408,465 420,410 442,327 455,360 470,410 485,470 500,485 510,497 528,477 540,484 550,478 562,482 572,530']],
    ['green',
        [580, 560, '594,530 602,508 612,490 620,465 635,452 645,456 658,488 670,468 682,483 697,448 715,453 730,455 752,477 770,460 785,470 798,465 812,471 845,437 852,439 862,431 875,449 895,451 905,443 920,449 955,450 965,441 972,446 992,433 1010,442 1025,439 1045,462 1060,470 1072,467 1085,478 1105,465 1120,465 1143,489 1155,465 1185,457 1205,465 1217,461 1230,477 1247,464 1262,468 1285,456 1298,461 1315,447 1330,475 1350,490 1362,480']],
    ['blue', [580, 560, '356,530 364,495 374,530']],
    ['blue', [580, 560, '412,530 425,440 442,372 458,430 475,530']]
];

const lensTraces = [
    ['blue', [580, 180, '254,360 262,430 269,468 275,400']],
    ['salmon', [580, 180, '275,400 278,345']],
    ['salmon', [580, 180, '312,340 318,460 325,541 330,518']],
    ['blue', [580, 180, '330,518 336,470 344,425 358,424 365,380 372,335']],
    ['green', [580, 180, '40,602 55,612 70,632 90,662 105,645 115,615 125,600 143,592 158,602 170,632 195,633 210,665 222,672 237,665 252,680 268,707 278,685 295,612 302,585 313,575 325,585 348,630 363,600 378,580 390,530 400,440 412,375 430,330']],
    ['green', [580, 180, '463,330 480,420 492,520 507,580 524,571 535,605 545,638 560,652 586,700 600,665 617,640 640,680 665,706 680,692 692,677 705,710 722,755 740,740 762,739 775,720 790,700 805,660 820,600 828,560']],
    ['blue', [580, 180, '576,350 590,440 600,470 613,498 628,570 640,630 655,648 680,685 695,693 710,730 724,765 733,755 752,700 765,670 775,620 785,565 800,520']],
    ['red', [580, 380, '50,345 72,290 85,279 100,289 115,262 128,247 150,280 180,320 195,370 208,390 220,370 228,340 236,317 245,325 255,380 262,415 266,416']],
    ['salmon', [580, 380, '266,416 271,405 282,230 287,150 293,142 297,150 302,250 310,370 322,415']],
    ['orange', [580, 380, '322,415 340,373 355,365 370,300 385,220 395,130 407,50 421,0 430,-20 447,-58 458,-30 466,0 475,80 490,180 500,218 515,238 525,250 540,300 560,350 575,420 590,464']],
    ['brown', [580, 380, '590,464 595,465 610,450 635,484 657,471 690,508']],
    ['red', [580, 380, '765,450 785,365 795,342 812,298 832,275 850,283']],
    ['green', [580, 380, '386,590 400,510 408,490 422,483 430,478 445,465 455,480 470,530 484,590']]
];

function add(parent, tag, attrs) {
    const el = document.createElementNS(SVG_NS, tag);
    for (const name in attrs) {
        el.setAttribute(name, attrs[name]);
    }
    parent.appendChild(el);
    return el;
}

function toPoints(parts) {
    const points = [];
    parts.forEach(([ox, oy, samples]) => {
        samples.split(' ').forEach(pair => {
            const [x, y] = pair.split(',').map(Number);
            points.push([ox + x / 3, oy + y / 3]);
        });
    });
    return points;
}

// Monotone cubic through the samples, so peaks stay where they were measured
function smoothPath(pts) {
    const n = pts.length;
    const slope = [];
    for (let i = 0; i < n - 1; i++) {
        slope.push((pts[i + 1][1] - pts[i][1]) / (pts[i + 1][0] - pts[i][0]));
    }
    const m = pts.map((p, i) => {
        if (i === 0) return slope[0];
        if (i === n - 1) return slope[n - 2];
        const a = slope[i - 1];
        const b = slope[i];
        return a * b <= 0 ? 0 : 2 * a * b / (a + b);
    });
    let d = 'M' + pts[0][0].toFixed(1) + ' ' + pts[0][1].toFixed(1);
    for (let i = 0; i < n - 1; i++) {
        const h = (pts[i + 1][0] - pts[i][0]) / 3;
        d += 'C' + [
            pts[i][0] + h, pts[i][1] + h * m[i],
            pts[i + 1][0] - h, pts[i + 1][1] - h * m[i + 1],
            pts[i + 1][0], pts[i + 1][1]
        ].map(v => v.toFixed(1)).join(' ');
    }
    return d;
}

function drawTraces(id, list) {
    const group = document.getElementById(id);
    list.forEach(([color, ...parts]) => {
        add(group, 'path', { class: 'trace ' + color, d: smoothPath(toPoints(parts)) });
    });
}

function drawGrid() {
    const grid = document.getElementById('grid');
    const rows = [185, 217, 233, 282, 330, 379, 428, 444, 476, 493, 525, 541, 574, 590, 622, 639, 687, 720];
    [229, 455, 681, 906].forEach(x => {
        add(grid, 'path', { class: 'second', d: `M${x + 0.5} 182V730` });
    });
    [92, 138, 183, 273, 318, 363, 409, 499, 544, 589, 635, 725, 770, 815, 860, 951, 996].forEach(x => {
        rows.forEach(y => add(grid, 'rect', { class: 'dots', x, y, width: 1, height: 1 }));
    });
}

function drawBrackets() {
    const group = document.getElementById('brackets');
    [192, 242, 293, 343, 395, 445, 496, 547, 598, 648, 699].forEach((y, i) => {
        const x = i === 5 ? 73 : 56;
        add(group, 'path', { class: 'bracket', d: `M${x - 2} ${y}H${x + 2}M${x} ${y}V${y + 26}M${x - 2} ${y + 26}H${x + 2}` });
    });
}

drawGrid();
drawTraces('traces', traces);
drawTraces('lens-traces', lensTraces);
drawBrackets();
```
